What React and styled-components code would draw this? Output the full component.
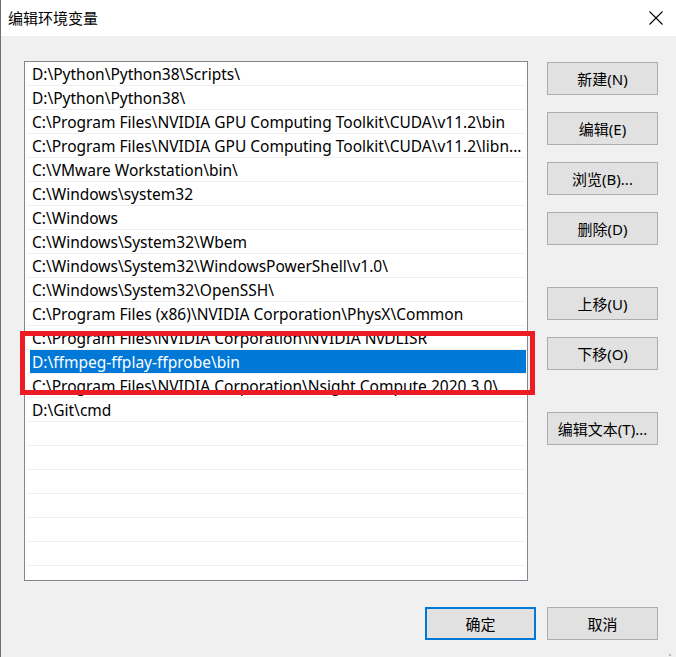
import React from 'react'
import styled, { createGlobalStyle } from 'styled-components'

const GlobalStyle = createGlobalStyle`
  html, body {
    margin: 0;
    padding: 0;
    background: #f0f0f0;
  }
  body {
    font-family: "Noto Sans", "Noto Sans CJK SC", sans-serif;
  }
`

const paths = [
  'D:\\Python\\Python38\\Scripts\\',
  'D:\\Python\\Python38\\',
  'C:\\Program Files\\NVIDIA GPU Computing Toolkit\\CUDA\\v11.2\\bin',
  'C:\\Program Files\\NVIDIA GPU Computing Toolkit\\CUDA\\v11.2\\libn...',
  'C:\\VMware Workstation\\bin\\',
  'C:\\Windows\\system32',
  'C:\\Windows',
  'C:\\Windows\\System32\\Wbem',
  'C:\\Windows\\System32\\WindowsPowerShell\\v1.0\\',
  'C:\\Windows\\System32\\OpenSSH\\',
  'C:\\Program Files (x86)\\NVIDIA Corporation\\PhysX\\Common',
  'C:\\Program Files\\NVIDIA Corporation\\NVIDIA NvDLISR',
  'D:\\ffmpeg-ffplay-ffprobe\\bin',
  'C:\\Program Files\\NVIDIA Corporation\\Nsight Compute 2020.3.0\\',
  'D:\\Git\\cmd',
]

const SELECTED = 12
const TOTAL_ROWS = 22

const sideButtons = [
  { label: '新建(N)', gap: 0 },
  { label: '编辑(E)', gap: 17 },
  { label: '浏览(B)...', gap: 17 },
  { label: '删除(D)', gap: 17 },
  { label: '上移(U)', gap: 42 },
  { label: '下移(O)', gap: 17 },
  { label: '编辑文本(T)...', gap: 42 },
]

function App() {
  const rows = Array.from({ length: TOTAL_ROWS }, (_, i) => paths[i] || '')

  return (
    <>
      <GlobalStyle />
      <Window>
        <TitleBar>
          <Title>编辑环境变量</Title>
          <CloseButton aria-label="close">
            <svg width="14" height="14" viewBox="0 0 14 14">
              <path d="M0.5 0.5 L13.5 13.5 M13.5 0.5 L0.5 13.5" stroke="#000" strokeWidth="1.1" fill="none" />
            </svg>
          </CloseButton>
        </TitleBar>

        <Body>
          <ListWrap>
            <ListBox>
              {rows.map((text, i) => (
                <Row key={i} $selected={i === SELECTED}>
                  {text}
                </Row>
              ))}
            </ListBox>
            {/* red annotation frame drawn over the list */}
            <Highlight />
          </ListWrap>

          <ButtonColumn>
            {sideButtons.map((b) => (
              <Button key={b.label} style={{ marginTop: b.gap }}>
                {b.label}
              </Button>
            ))}
          </ButtonColumn>
        </Body>

        <Footer>
          <Button $primary>确定</Button>
          <Button>取消</Button>
        </Footer>

        <Grip>
          <svg width="12" height="10" viewBox="0 0 12 10">
            <rect x="8" y="0" width="2" height="2" fill="#b9b9b9" />
            <rect x="4" y="4" width="2" height="2" fill="#b9b9b9" />
            <rect x="8" y="4" width="2" height="2" fill="#b9b9b9" />
            <rect x="0" y="7" width="2" height="2" fill="#b9b9b9" />
            <rect x="4" y="7" width="2" height="2" fill="#b9b9b9" />
            <rect x="8" y="7" width="2" height="2" fill="#b9b9b9" />
          </svg>
        </Grip>
      </Window>
    </>
  )
}

export default App

const Window = styled.div`
  position: relative;
  width: 676px;
  height: 657px;
  box-sizing: border-box;
  background: #f0f0f0;
  border-left: 1px solid #6e6e6e;
  overflow: hidden;
`

const TitleBar = styled.div`
  height: 36px;
  background: #ffffff;
  display: flex;
  align-items: center;
  justify-content: space-between;
  padding: 0 13px 0 7px;
`

const Title = styled.div`
  font-family: "Noto Sans CJK SC", sans-serif;
  font-size: 15px;
  color: #000;
  margin-top: -1px;
`

const CloseButton = styled.div`
  width: 14px;
  height: 14px;
  display: flex;
`

const Body = styled.div`
  display: flex;
  padding: 25px 18px 0 23px;
  gap: 19px;
`

const ListWrap = styled.div`
  position: relative;
`

const ListBox = styled.div`
  width: 504px;
  height: 520px;
  box-sizing: border-box;
  border: 1px solid #82878f;
  background: #ffffff;
  overflow: hidden;
`

const Row = styled.div`
  height: 23px;
  margin: 0 1px;
  border-bottom: 1px solid #f0f0f0;
  padding: 1px 0 0 6px;
  box-sizing: border-box;
  height: 24px;
  display: flex;
  align-items: center;
  font-family: "Noto Sans", "Noto Sans CJK SC", sans-serif;
  font-size: 15.5px;
  white-space: nowrap;
  overflow: hidden;
  color: ${(p) => (p.$selected ? '#ffffff' : '#000000')};
  background: ${(p) =>
    p.$selected ? 'linear-gradient(to right, transparent 4px, #0078d7 4px)' : 'transparent'};
`

const Highlight = styled.div`
  position: absolute;
  left: -4px;
  top: 270px;
  width: 515px;
  height: 64px;
  box-sizing: border-box;
  border: 5px solid #ec1c24;
  pointer-events: none;
`

const ButtonColumn = styled.div`
  display: flex;
  flex-direction: column;
  padding-top: 1px;
`

const Button = styled.div`
  width: 111px;
  height: 33px;
  box-sizing: border-box;
  display: flex;
  align-items: center;
  justify-content: center;
  background: #e1e1e1;
  border: ${(p) => (p.$primary ? '2px solid #0078d7' : '1px solid #adadad')};
  font-family: "Noto Sans", "Noto Sans CJK SC", sans-serif;
  font-size: 15px;
  color: #000;
`

const Footer = styled.div`
  display: flex;
  justify-content: flex-end;
  gap: 11px;
  padding: 26px 18px 0 0;
`

const Grip = styled.div`
  position: absolute;
  right: 3px;
  bottom: 0px;
  width: 12px;
  height: 10px;
`
